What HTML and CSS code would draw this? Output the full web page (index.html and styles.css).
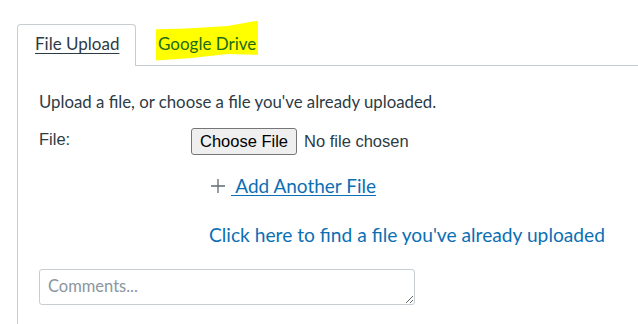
FILE: index.html
```html
<!DOCTYPE html>
<html lang="en">
<head>
  <meta charset="UTF-8" />
  <title>Submit Assignment</title>
  <link rel="stylesheet" href="styles.css">
</head>
<body>
  <!-- Tabs -->
  <div class="tabs">
    <a href="#" class="tab tab-active">File Upload</a>
    <a href="#" class="tab tab-drive"><span class="marker">Google Drive</span></a>
    <div class="tab-fill"></div>
  </div>

  <!-- Upload panel -->
  <div class="panel">
    <p class="intro">Upload a file, or choose a file you've already uploaded.</p>
    <div class="file-row">
      <label for="upload" class="file-label">File:</label>
      <input type="file" id="upload" class="file-input">
    </div>
    <div class="add-row">
      <svg class="plus" width="16" height="16" viewBox="0 0 16 16">
        <path d="M8 1v14M1 8h14" stroke="#5f6b73" stroke-width="1.3" fill="none"/>
      </svg><a href="#" class="add-link">&nbsp;Add Another File</a>
    </div>
    <div class="find-row">
      <a href="#" class="find-link">Click here to find a file you've already uploaded</a>
    </div>
    <textarea class="comments" placeholder="Comments..."></textarea>
  </div>
</body>
</html>
```

FILE: styles.css
```css
/* Reset */
* {
  margin: 0;
  padding: 0;
  box-sizing: border-box;
}
body {
  font-family: Lato, 'Liberation Sans', sans-serif;
  color: #2d3b45;
  background: #fff;
  padding: 24px 0 0 17px;
  overflow: hidden;
}

/* Tabs */
.tabs {
  display: flex;
  height: 42px;
}
.tab {
  font-size: 17px;
  text-decoration: none;
  display: flex;
  align-items: center;
}
.tab-active {
  width: 119px;
  padding: 0 0 4px 17px;
  border: 1px solid #c7cdd1;
  border-bottom: none;
  border-radius: 4px 4px 0 0;
  color: #2d3b45;
  text-decoration: underline;
  text-underline-offset: 3px;
}
.tab-drive {
  width: 140px;
  padding: 0 0 3px 22px;
  border-bottom: 1px solid #c7cdd1;
  color: #1c6a14;
}
.tab-fill {
  flex: 1;
  border-bottom: 1px solid #c7cdd1;
}

/* Highlighter mark over Google Drive */
.marker {
  position: relative;
  z-index: 0;
}
.marker::before {
  content: "";
  position: absolute;
  left: -2px;
  right: -2px;
  top: -12px;
  bottom: -7px;
  background: #ffff00;
  z-index: -1;
  clip-path: polygon(0 22%, 30% 20%, 70% 14%, 100% 0, 100% 86%, 70% 84%, 35% 94%, 0 100%);
}

/* Panel */
.panel {
  border-left: 1px solid #c7cdd1;
  padding: 26px 0 0 21px;
  height: 260px;
}
.intro {
  font-size: 16.8px;
  line-height: 20px;
}

.file-row {
  display: flex;
  align-items: flex-start;
  margin-top: 16px;
}
.file-label {
  width: 152px;
  font-family: 'Liberation Sans', Arial, sans-serif;
  font-size: 16.5px;
  line-height: 20px;
  padding-top: 1px;
}
.file-input {
  font-family: 'Liberation Sans', Arial, sans-serif;
  font-size: 16.5px;
  color: #2d3b45;
}
.file-input::file-selector-button {
  font-family: 'Liberation Sans', Arial, sans-serif;
  font-size: 16.5px;
  height: 27px;
  padding: 0 8px;
  margin-right: 7px;
  color: #000;
  background: #efefef;
  border: 1px solid #767676;
  border-radius: 3px;
}

.add-row {
  display: flex;
  align-items: center;
  margin: 20px 0 0 171px;
  font-size: 19px;
  line-height: 22px;
}
.plus {
  margin-right: 5px;
}
.add-link,
.find-link {
  color: #0b6fb4;
}
.add-link {
  text-underline-offset: 2px;
}

.find-row {
  margin: 27px 0 0 170px;
  font-size: 19.2px;
  line-height: 22px;
}
.find-link {
  text-decoration: none;
}

.comments {
  display: block;
  margin-top: 23px;
  width: 376px;
  height: 36px;
  padding: 6px 8px;
  font-family: Lato, sans-serif;
  font-size: 16.5px;
  color: #2d3b45;
  border: 1px solid #c7cdd1;
  border-radius: 3px;
}
.comments::placeholder {
  color: #8b969e;
}
```
